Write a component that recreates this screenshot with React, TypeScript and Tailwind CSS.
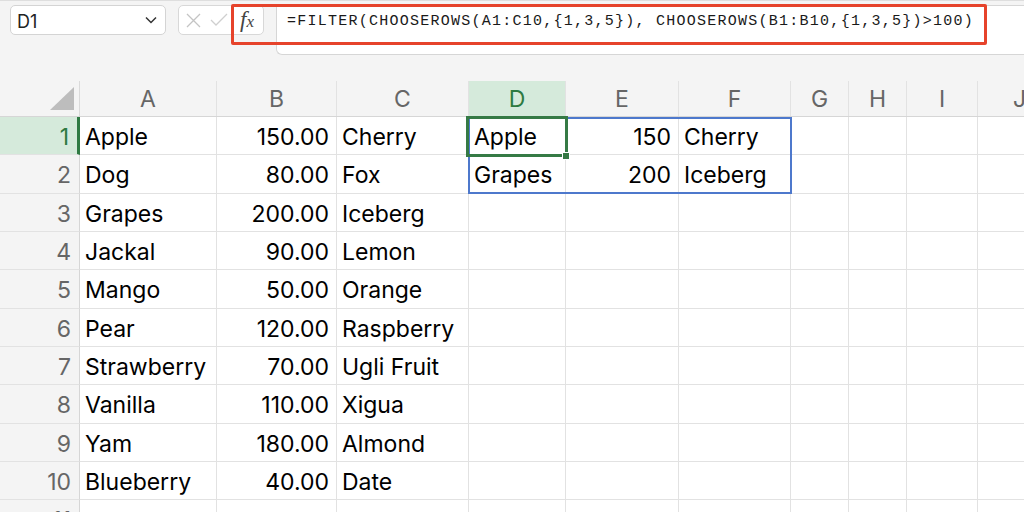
import React from "react";

const cols = [
  { l: "A", w: 137 },
  { l: "B", w: 120 },
  { l: "C", w: 132 },
  { l: "D", w: 97 },
  { l: "E", w: 113 },
  { l: "F", w: 112 },
  { l: "G", w: 58 },
  { l: "H", w: 58 },
  { l: "I", w: 71 },
  { l: "J", w: 84 },
];

type Cell = { v: string; num?: boolean };

const data: Cell[][] = [
  [{ v: "Apple" }, { v: "150.00", num: true }, { v: "Cherry" }, { v: "Apple" }, { v: "150", num: true }, { v: "Cherry" }],
  [{ v: "Dog" }, { v: "80.00", num: true }, { v: "Fox" }, { v: "Grapes" }, { v: "200", num: true }, { v: "Iceberg" }],
  [{ v: "Grapes" }, { v: "200.00", num: true }, { v: "Iceberg" }],
  [{ v: "Jackal" }, { v: "90.00", num: true }, { v: "Lemon" }],
  [{ v: "Mango" }, { v: "50.00", num: true }, { v: "Orange" }],
  [{ v: "Pear" }, { v: "120.00", num: true }, { v: "Raspberry" }],
  [{ v: "Strawberry" }, { v: "70.00", num: true }, { v: "Ugli Fruit" }],
  [{ v: "Vanilla" }, { v: "110.00", num: true }, { v: "Xigua" }],
  [{ v: "Yam" }, { v: "180.00", num: true }, { v: "Almond" }],
  [{ v: "Blueberry" }, { v: "40.00", num: true }, { v: "Date" }],
  [],
];

const heights = [38, 39, 38, 38, 39, 38, 38, 39, 38, 38, 38];

function TopBar() {
  return (
    <div className="relative h-[81px] bg-[#f4f4f4] border-t border-[#dedede]">
      <div className="flex items-start pt-[4px]">
        <div className="ml-[10px] w-[156px] h-[30px] bg-white border border-[#d4d4d4] rounded-[5px] flex items-center justify-between pl-[6px] pr-[8px]">
          <span className="text-[18px] text-[#222] pt-[2px]">D1</span>
          <svg width="12" height="8" viewBox="0 0 12 8" fill="none" stroke="#333" strokeWidth="1.5">
            <path d="M1 1.5l5 5 5-5" />
          </svg>
        </div>
        <div className="ml-[12px] w-[86px] h-[30px] bg-white border border-[#d8d8d8] rounded-[5px] flex items-center pl-[7px]">
          <svg width="15" height="15" viewBox="0 0 15 15" stroke="#c4c4c4" strokeWidth="1.3">
            <path d="M1 1l13 13M14 1L1 14" />
          </svg>
          <svg className="ml-[9px]" width="18" height="14" viewBox="0 0 18 14" fill="none" stroke="#cfcfcf" strokeWidth="1.3">
            <path d="M1 7l5 5L17 1" />
          </svg>
          <span className="ml-[12px] text-[23px] text-[#444] leading-none pb-[2px]" style={{ fontFamily: "'Liberation Serif', serif" }}>
            <span className="italic">f</span>
            <span className="text-[17px] italic">x</span>
          </span>
        </div>
        <div className="ml-[12px] flex-1 h-[50px] bg-white border-l border-t border-b border-[#d6d6d6] rounded-bl-[6px] pl-[10px] pt-[1px]">
          <span
            className="text-[15px] text-[#1a1a1a] tracking-[1.25px] whitespace-nowrap"
            style={{ fontFamily: "'Liberation Mono', monospace" }}
          >
            =FILTER(CHOOSEROWS(A1:C10,{"{"}1,3,5{"}"}), CHOOSEROWS(B1:B10,{"{"}1,3,5{"}"})&gt;100)
          </span>
        </div>
      </div>
      <div className="absolute left-[231px] top-[3px] w-[756px] h-[41px] border-[3px] border-[#e6432b] rounded-[2px]" />
    </div>
  );
}

function HeaderRow() {
  return (
    <div className="flex h-[36px] bg-[#f4f4f4] border-b border-[#d6d6d6]">
      <div className="w-[80px] shrink-0 relative border-r border-[#dadada]">
        <svg className="absolute left-[50px] top-[6px]" width="24" height="23" viewBox="0 0 24 23">
          <polygon points="24,0 24,23 0,23" fill="#bdbdbd" />
        </svg>
      </div>
      {cols.map((c) => (
        <div
          key={c.l}
          style={{ width: c.w }}
          className={
            c.l === "D"
              ? "shrink-0 flex items-center justify-center pt-[2px] bg-[#d5eadb] text-[#2e7a41] border-r border-[#e2e2e2] text-[23px]"
              : "shrink-0 flex items-center justify-center pt-[2px] text-[#666] border-r border-[#e2e2e2] text-[23px]"
          }
        >
          {c.l}
        </div>
      ))}
    </div>
  );
}

export default function App() {
  return (
    <div className="w-[1024px] h-[512px] overflow-hidden bg-white" style={{ fontFamily: "Inter, 'Noto Sans', sans-serif" }}>
      <TopBar />
      <HeaderRow />
      <div className="relative">
        {data.map((row, i) => (
          <div key={i} className="flex" style={{ height: heights[i] }}>
            <div
              className={
                i === 0
                  ? "w-[80px] shrink-0 flex items-center justify-end pr-[8px] pt-[3px] bg-[#d5eadb] text-[#2e7a41] border-r-[3px] border-[#2f7a43] border-b border-b-[#e2e2e2] text-[23px]"
                  : "w-[80px] shrink-0 flex items-center justify-end pr-[8px] pt-[3px] bg-[#f4f4f4] text-[#666] border-r border-[#d6d6d6] border-b border-b-[#e2e2e2] text-[23px]"
              }
            >
              {i + 1}
            </div>
            {cols.map((c, j) => {
              const cell = row[j];
              return (
                <div
                  key={c.l}
                  style={{ width: c.w }}
                  className={
                    cell?.num
                      ? "shrink-0 flex items-center justify-end pr-[7px] pt-[3px] border-r border-b border-[#e2e2e2] text-[23px] text-black whitespace-nowrap"
                      : "shrink-0 flex items-center pl-[5px] pt-[3px] border-r border-b border-[#e2e2e2] text-[23px] text-black whitespace-nowrap"
                  }
                >
                  {cell?.v}
                </div>
              );
            })}
          </div>
        ))}
        <div className="absolute left-[468px] top-[0px] w-[324px] h-[77px] border-2 border-[#4d78cc]" />
        <div className="absolute left-[466px] top-[-1px] w-[102px] h-[41px] border-[3px] border-[#357a45]" />
        <div className="absolute left-[562px] top-[35px] w-[8px] h-[8px] bg-[#357a45] border border-white" />
      </div>
    </div>
  );
}
